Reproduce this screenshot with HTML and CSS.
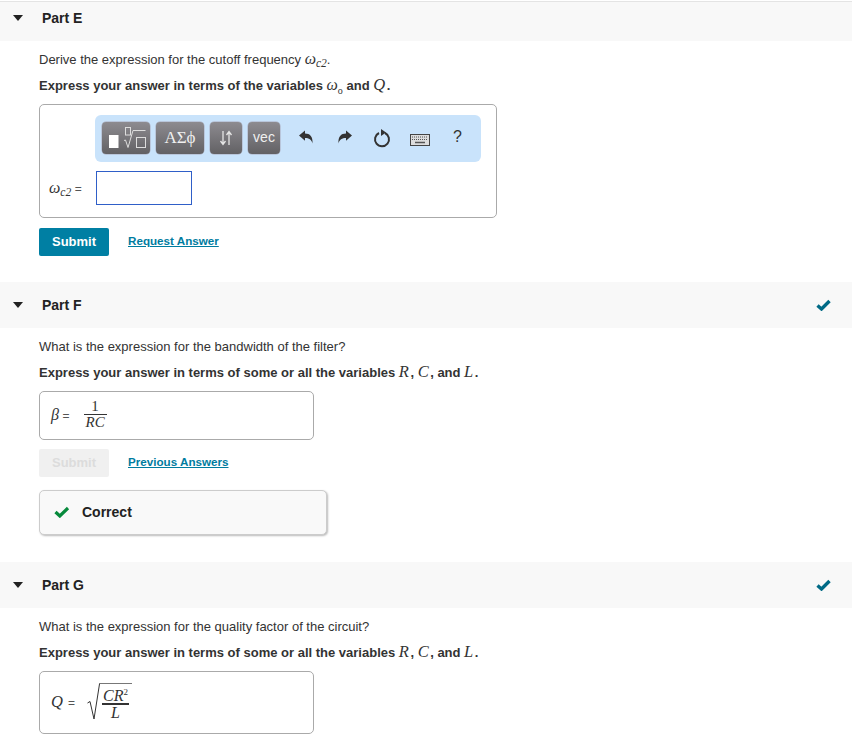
FILE: index.html
```html
<!DOCTYPE html>
<html lang="en">
<head>
<meta charset="utf-8">
<title>Parts E, F, G</title>
<link rel="stylesheet" href="styles.css">
</head>
<body>
<main class="page">
  <section class="part part-e">
    <header class="part-head head-e">
      <span class="caret"></span><h2>Part E</h2>
    </header>
    <div class="part-body">
      <p class="q">Derive the expression for the cutoff frequency <i class="m">ω<sub>c2</sub></i>.</p>
      <p class="ask">Express your answer in terms of the variables <i class="m">ω</i><sub class="m-up">o</sub> and <i class="m big">Q</i>.</p>
      <div class="answer answer-e">
        <div class="toolbar">
          <button class="tb tb-a" type="button" aria-label="templates">
            <svg width="44" height="26" viewBox="0 0 44 26"><rect x="5" y="10" width="9.500" height="13" fill="#fff"/><rect x="21.500" y="2.500" width="5" height="7.500" fill="none" stroke="#ddd" stroke-width="1"/><path d="M20 15.500L21.500 15 24 22.500 29 5.500H41.500" fill="none" stroke="#ddd" stroke-width="1"/><rect x="32.500" y="12.500" width="9" height="10" fill="none" stroke="#ddd" stroke-width="1"/></svg>
          </button>
          <button class="tb tb-b" type="button">ΑΣϕ</button>
          <button class="tb tb-c" type="button" aria-label="arrows">
            <svg width="14" height="16" viewBox="0 0 14 16"><path d="M4 1v13M1.500 11L4 14.500 6.500 11M10 15V2M7.500 5L10 1.500 12.500 5" fill="none" stroke="#e6e6e6" stroke-width="1.300"/></svg>
          </button>
          <button class="tb tb-d" type="button">vec</button>
          <div class="tools">
            <svg class="t1" width="16" height="14" viewBox="0 0 16 14"><path d="M1 5.500L7 0.500V3.500C12 3.500 15 6.500 14.500 13.500C13.500 9.500 11 8 7 8V10.800Z" fill="#333"/></svg>
            <svg class="t2" width="16" height="14" viewBox="0 0 16 14"><path d="M15 5.500L9 0.500V3.500C4 3.500 1 6.500 1.500 13.500C2.500 9.500 5 8 9 8V10.800Z" fill="#333"/></svg>
            <svg class="t3" width="18" height="20" viewBox="0 0 18 20"><path d="M6 5A7 7 0 1 0 12 5" fill="none" stroke="#333" stroke-width="2"/><path d="M8 1L13 4.500 8 8Z" fill="#333"/></svg>
            <svg class="t4" width="20" height="12" viewBox="0 0 20 12"><rect x="0.500" y="0.500" width="19" height="11" fill="#ddd" stroke="#444"/><path d="M2 3h16M2 5.500h16" stroke="#555" stroke-width="1" stroke-dasharray="1 1"/><path d="M5 8.500h10" stroke="#555" stroke-width="1.500"/></svg>
            <span class="t5">?</span>
          </div>
        </div>
        <div class="input-row">
          <span class="lbl"><i class="m">ω<sub>c2</sub></i> <span class="eq">=</span></span>
          <div class="input"></div>
        </div>
      </div>
      <div class="actions act-e">
        <button class="submit" type="button">Submit</button>
        <a class="link" href="#">Request Answer</a>
      </div>
    </div>
  </section>

  <section class="part part-f">
    <header class="part-head">
      <span class="caret"></span><h2>Part F</h2>
      <svg class="done" width="15" height="12" viewBox="0 0 15 12"><path d="M1.500 6.500L5.500 10 13.500 2" fill="none" stroke="#006a86" stroke-width="3.400"/></svg>
    </header>
    <div class="part-body">
      <p class="q">What is the expression for the bandwidth of the filter?</p>
      <p class="ask">Express your answer in terms of some or all the variables <i class="m big">R</i>, <i class="m big">C</i>, and <i class="m big">L</i>.</p>
      <div class="answer answer-f">
        <span class="lbl"><i class="m">β</i> <span class="eq">=</span></span>
        <span class="frac"><span class="num up">1</span><span class="den">RC</span></span>
      </div>
      <div class="actions act-f">
        <button class="submit off" type="button">Submit</button>
        <a class="link" href="#">Previous Answers</a>
      </div>
      <div class="correct">
        <svg width="16" height="12" viewBox="0 0 16 12"><path d="M1.500 6L5.800 10 14 2" fill="none" stroke="#078a3c" stroke-width="3.200"/></svg>
        <strong>Correct</strong>
      </div>
    </div>
  </section>

  <section class="part part-g">
    <header class="part-head">
      <span class="caret"></span><h2>Part G</h2>
      <svg class="done" width="15" height="12" viewBox="0 0 15 12"><path d="M1.500 6.500L5.500 10 13.500 2" fill="none" stroke="#006a86" stroke-width="3.400"/></svg>
    </header>
    <div class="part-body">
      <p class="q">What is the expression for the quality factor of the circuit?</p>
      <p class="ask">Express your answer in terms of some or all the variables <i class="m big">R</i>, <i class="m big">C</i>, and <i class="m big">L</i>.</p>
      <div class="answer answer-g">
        <span class="lbl"><i class="m big">Q</i> <span class="eq">=</span></span>
        <span class="root">
          <svg width="13" height="38" viewBox="0 0 13 38"><path d="M0.500 20L3 18.500 7 36 12.500 1" fill="none" stroke="#333" stroke-width="1"/></svg>
          <span class="frac under"><span class="num">CR<sup>2</sup></span><span class="den">L</span></span>
        </span>
      </div>
    </div>
  </section>
</main>
</body>
</html>
```

FILE: styles.css
```css
* { box-sizing: border-box; }
html, body { margin: 0; padding: 0; background: #fff; }
body { font-family: "Liberation Sans", Arial, sans-serif; font-size: 13px; color: #333; overflow: hidden; height: 734px; }
.page { width: 852px; }
p, h2 { margin: 0; }

.part-e { border-top: 1px solid #e4e4e4; margin-top: 1px; }
.part-f { margin-top: 26px; }
.part-g { margin-top: 27px; }

.part-head { height: 46px; background: #f8f8f8; display: flex; align-items: center; position: relative; }
.head-e { height: 39px; align-items: flex-start; padding-top: 7px; }
.part-head h2 { font-size: 14px; line-height: 18px; font-weight: bold; color: #222; margin-left: 19px; }
.caret { width: 0; height: 0; margin-left: 13px; border-left: 5.500px solid transparent; border-right: 5.500px solid transparent; border-top: 6px solid #222; }
.head-e .caret { margin-top: 6px; }
.done { position: absolute; left: 816px; top: 17px; }

.part-body { padding: 10px 0 0 39px; }
.q { line-height: 18px; height: 18px; font-size: 13px; color: #333; }
.ask { line-height: 18px; height: 18px; margin-top: 8px; font-weight: bold; font-size: 13px; color: #333; white-space: nowrap; }

.m { font-family: "Liberation Serif", serif; font-style: italic; font-weight: normal; font-size: 16px; line-height: 0; }
.m.big { font-size: 16.500px; letter-spacing: 1.500px; }
.m sub { font-size: 11.500px; line-height: 0; vertical-align: -3px; }
.m-up { font-family: "Liberation Serif", serif; font-weight: normal; font-size: 10px; line-height: 0; vertical-align: -4px; }

.answer { border: 1px solid #aaa; border-radius: 5px; background: #fff; margin-top: 9px; }
.answer-e { width: 458px; height: 114px; padding: 10px 15px 0 55px; }
.toolbar { width: 386px; height: 47px; background: #c9e3fb; border-radius: 6px; display: flex; align-items: center; padding: 0 0 1px 7px; gap: 6px; }
.tb { height: 32px; padding: 0; border: 0; border-radius: 4px; background: linear-gradient(#8d8b90, #626164); color: #f0f0f0; display: flex; align-items: center; justify-content: center; box-shadow: 0 0 0 0.500px #aab; }
.tb-a, .tb-b { width: 48px; }
.tb-c, .tb-d { width: 32px; }
.tb-b { font-family: "Liberation Serif", serif; font-size: 17px; }
.tb-d { font-family: "Liberation Sans", sans-serif; font-size: 14px; padding-bottom: 3px; }
.tools { position: relative; flex: 1; height: 32px; }
.tools > * { position: absolute; }
.t1 { left: 12px; top: 8px; }
.t2 { left: 51px; top: 8px; }
.t3 { left: 87px; top: 6px; }
.t4 { left: 124px; top: 12px; }
.t5 { left: 167px; top: 6px; font-size: 16px; line-height: 18px; color: #333; }

.input-row { display: flex; align-items: center; margin: 9px 0 0 -46px; }
.lbl { white-space: nowrap; }
.input-row .lbl { width: 47px; }
.eq { font-size: 12px; font-family: "Liberation Sans", sans-serif; font-style: normal; color: #555; }
.input { width: 96px; height: 34px; border: 1px solid #2f5fc8; background: #fff; }

.actions { display: flex; align-items: center; height: 28px; gap: 19px; }
.act-e { margin-top: 10px; }
.act-f { margin-top: 9px; }
.submit { width: 70px; height: 28px; padding: 0 0 2px; border: 0; border-radius: 2px; background: #007fa3; color: #fff; font: bold 13px "Liberation Sans", sans-serif; }
.submit.off { background: #f0f0f0; color: #dcdcdc; }
.link { font-size: 11.650px; font-weight: bold; color: #007c9f; text-decoration: underline; position: relative; top: -2px; }

.answer-f { width: 275px; height: 49px; padding: 0 11px; display: flex; align-items: center; gap: 14px; }
.answer-g { width: 275px; height: 63px; padding: 0 11px; display: flex; align-items: center; gap: 12px; }
.frac { display: inline-flex; flex-direction: column; align-items: center; font-family: "Liberation Serif", serif; font-size: 15px; line-height: 15px; }
.frac .num { padding: 0 1px; border-bottom: 1px solid #333; }
.frac .num.up { font-style: normal; }
.frac .den { font-style: italic; }
.frac .num:not(.up) { font-style: italic; }
.answer-f .frac { width: 23px; margin-bottom: 2px; }
.answer-f .num { align-self: stretch; text-align: center; }
.num sup { font-size: 9px; line-height: 0; font-style: normal; }
.root { display: inline-flex; align-items: flex-start; margin-top: -1px; }
.under { border-top: 1px solid #777; margin-left: -1px; padding: 5px 3px 0 3px; font-size: 16px; }
.under .num { border-bottom: 2px solid #333; align-self: stretch; text-align: center; line-height: 14px; }

.correct { width: 288px; height: 45px; margin-top: 13px; padding: 0 0 2px 14px; border: 1px solid #ccc; border-radius: 5px; background: #f9f9f9; box-shadow: 1px 1px 2px #bbb; display: flex; align-items: center; gap: 12px; }
.correct strong { font-size: 14px; color: #222; }
```
